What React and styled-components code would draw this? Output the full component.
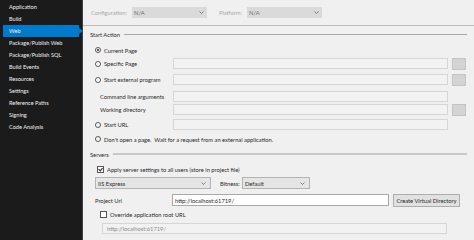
import React from "react";
import styled, { createGlobalStyle } from "styled-components";

const GlobalStyle = createGlobalStyle`
  html, body {
    margin: 0;
    padding: 0;
    background: #f0f0f0;
  }
  * {
    box-sizing: border-box;
  }
`;

const navItems = [
  "Application",
  "Build",
  "Web",
  "Package/Publish Web",
  "Package/Publish SQL",
  "Build Events",
  "Resources",
  "Settings",
  "Reference Paths",
  "Signing",
  "Code Analysis",
];

function Chevron() {
  return (
    <svg width="5" height="3" viewBox="0 0 5 3">
      <path d="M0.5 0.5 L2.5 2.5 L4.5 0.5" fill="none" stroke="#6a6a6a" strokeWidth="0.8" />
    </svg>
  );
}

function App() {
  return (
    <>
      <GlobalStyle />
      <Window>
        <Sidebar>
          {navItems.map((item) => (
            <NavItem key={item} $active={item === "Web"}>
              {item}
            </NavItem>
          ))}
        </Sidebar>

        <Panel>
          <Toolbar>
            <ToolLabel $width={41}>Configuration:</ToolLabel>
            <TopSelect $width={75}>
              N/A
              <Chevron />
            </TopSelect>
            <ToolLabel $width={28} $left={12}>Platform:</ToolLabel>
            <TopSelect $width={75}>
              N/A
              <Chevron />
            </TopSelect>
          </Toolbar>

          <Content>
            <GroupHeader $top={2}>
              <span>Start Action</span>
              <GroupLine />
            </GroupHeader>

            <Row $top={5}>
              <Radio $checked />
              <OptionText>Current Page</OptionText>
            </Row>

            <FieldRow $top={3}>
              <LabelCell>
                <Radio />
                <OptionText>Specific Page</OptionText>
              </LabelCell>
              <TextBox />
              <Browse />
            </FieldRow>

            <FieldRow $top={5}>
              <LabelCell>
                <Radio />
                <OptionText>Start external program</OptionText>
              </LabelCell>
              <TextBox />
              <Browse />
            </FieldRow>

            <FieldRow $top={6}>
              <LabelCell $indent={5}>Command line arguments</LabelCell>
              <TextBox />
              <Spacer />
            </FieldRow>

            <FieldRow $top={2}>
              <LabelCell $indent={5}>Working directory</LabelCell>
              <TextBox />
              <Browse />
            </FieldRow>

            <FieldRow $top={4}>
              <LabelCell>
                <Radio />
                <OptionText>Start URL</OptionText>
              </LabelCell>
              <TextBox />
              <Spacer />
            </FieldRow>

            <Row $top={4}>
              <Radio />
              <OptionText>Don't open a page.&nbsp; Wait for a request from an external application.</OptionText>
            </Row>

            <GroupHeader $top={4} $thick>
              <span>Servers</span>
              <GroupLine $thick />
            </GroupHeader>

            <Row $top={4} $indent={7}>
              <Check $checked />
              <OptionText>Apply server settings to all users (store in project file)</OptionText>
            </Row>

            <Row $top={3} $height={12}>
              <Select $width={116}>
                IIS Express
                <Chevron />
              </Select>
              <PlainLabel $width={22} $left={9}>Bitness:</PlainLabel>
              <Select $width={68}>
                Default
                <Chevron />
              </Select>
            </Row>

            <Row $top={5} $height={12}>
              <PlainLabel $width={77}>Project Url</PlainLabel>
              <UrlBox>http://localhost:61719/</UrlBox>
              <Button>Create Virtual Directory</Button>
            </Row>

            <Row $top={3} $indent={10}>
              <Check />
              <OptionText>Override application root URL</OptionText>
            </Row>

            <Row $top={4} $height={11} $indent={12}>
              <DisabledBox>http://localhost:61719/</DisabledBox>
            </Row>
          </Content>
        </Panel>
      </Window>
    </>
  );
}

export default App;

const Window = styled.div`
  display: flex;
  width: 474px;
  height: 240px;
  overflow: hidden;
  font-family: Lato, "Noto Sans", sans-serif;
  font-size: 5.75px;
  color: #2a2a2a;
`;

const Sidebar = styled.div`
  width: 83px;
  flex-shrink: 0;
  background: #1b1b1c;
  padding-top: 1px;
  border-right: 1px solid #3f3f46;
`;

const NavItem = styled.div`
  position: relative;
  height: 12px;
  line-height: 12px;
  margin-left: 3px;
  margin-right: 3px;
  padding-left: 6px;
  font-size: 5.6px;
  color: #f1f1f1;
  background: ${(p) => (p.$active ? "#007acc" : "transparent")};

  &::after {
    content: "";
    display: ${(p) => (p.$active ? "block" : "none")};
    position: absolute;
    right: -4px;
    top: 3px;
    border-top: 3px solid transparent;
    border-bottom: 3px solid transparent;
    border-left: 4px solid #007acc;
  }
`;

const Panel = styled.div`
  flex: 1;
  display: flex;
  flex-direction: column;
  background: #f0f0f0;
`;

const Toolbar = styled.div`
  height: 26px;
  display: flex;
  align-items: center;
  padding-left: 8px;
  padding-bottom: 1px;
  border-bottom: 1px solid #bdbdbd;
`;

const ToolLabel = styled.span`
  width: ${(p) => p.$width}px;
  flex-shrink: 0;
  color: #a8a8a8;
  margin-left: ${(p) => p.$left || 0}px;
`;

const TopSelect = styled.div`
  width: ${(p) => p.$width}px;
  height: 11px;
  background: #dadada;
  color: #6d6d6d;
  display: flex;
  align-items: center;
  justify-content: space-between;
  padding: 0 3px 0 2px;
`;

const Content = styled.div`
  display: flex;
  flex-direction: column;
  padding: 0 7px 0 7px;
`;

const GroupHeader = styled.div`
  display: flex;
  align-items: center;
  height: 12px;
  margin-top: ${(p) => p.$top}px;
  gap: 4px;
`;

const GroupLine = styled.div`
  flex: 1;
  height: ${(p) => (p.$thick ? 2 : 1)}px;
  background: ${(p) => (p.$thick ? "#c8c8c8" : "#a8a8a8")};
`;

const Row = styled.div`
  display: flex;
  align-items: center;
  height: ${(p) => p.$height || 10}px;
  margin-top: ${(p) => p.$top}px;
  padding-left: ${(p) => (p.$indent === undefined ? 5 : p.$indent)}px;
`;

const FieldRow = styled.div`
  display: flex;
  align-items: center;
  height: 11px;
  margin-top: ${(p) => p.$top}px;
  padding-left: 5px;
`;

const LabelCell = styled.div`
  width: 78px;
  flex-shrink: 0;
  display: flex;
  align-items: center;
  white-space: nowrap;
  padding-left: ${(p) => p.$indent || 0}px;
`;

const Radio = styled.span`
  width: 6px;
  height: 6px;
  border-radius: 50%;
  border: 1px solid #555;
  background: #fff;
  flex-shrink: 0;
  display: flex;
  align-items: center;
  justify-content: center;

  &::after {
    content: "";
    display: ${(p) => (p.$checked ? "block" : "none")};
    width: 2px;
    height: 2px;
    border-radius: 50%;
    background: #1e1e1e;
  }
`;

const Check = styled.span`
  width: 7px;
  height: 7px;
  border: 1px solid #555;
  background: #fff;
  flex-shrink: 0;
  position: relative;

  &::after {
    content: "";
    display: ${(p) => (p.$checked ? "block" : "none")};
    position: absolute;
    left: 1px;
    top: 0px;
    width: 2px;
    height: 3px;
    border-right: 1px solid #222;
    border-bottom: 1px solid #222;
    transform: rotate(40deg);
  }
`;

const OptionText = styled.span`
  margin-left: 3px;
  white-space: nowrap;
`;

const TextBox = styled.div`
  width: 275px;
  height: 11px;
  border: 1px solid #d6d6d6;
  background: #f2f2f2;
`;

const Browse = styled.div`
  width: 14px;
  height: 12px;
  margin-left: 4px;
  background: #d4d4d4;
  border: 1px solid #c4c4c4;
`;

const Spacer = styled.div`
  width: 18px;
`;

const Select = styled.div`
  width: ${(p) => p.$width}px;
  height: 12px;
  background: #e5e5e5;
  border: 1px solid #b4b4b4;
  display: flex;
  align-items: center;
  justify-content: space-between;
  padding: 0 4px 0 2px;
`;

const PlainLabel = styled.span`
  width: ${(p) => p.$width}px;
  margin-left: ${(p) => p.$left || 0}px;
  flex-shrink: 0;
`;

const UrlBox = styled.div`
  width: 217px;
  height: 12px;
  background: #fff;
  border: 1px solid #a9a9a9;
  display: flex;
  align-items: center;
  padding-left: 2px;
`;

const Button = styled.div`
  width: 67px;
  height: 13px;
  margin-left: 4px;
  background: #e1e1e1;
  border: 1px solid #adadad;
  display: flex;
  align-items: center;
  justify-content: center;
  white-space: nowrap;
`;

const DisabledBox = styled.div`
  width: 345px;
  height: 11px;
  border: 1px solid #d6d6d6;
  background: #f2f2f2;
  color: #8a8a8a;
  display: flex;
  align-items: center;
  padding-left: 4px;
`;
